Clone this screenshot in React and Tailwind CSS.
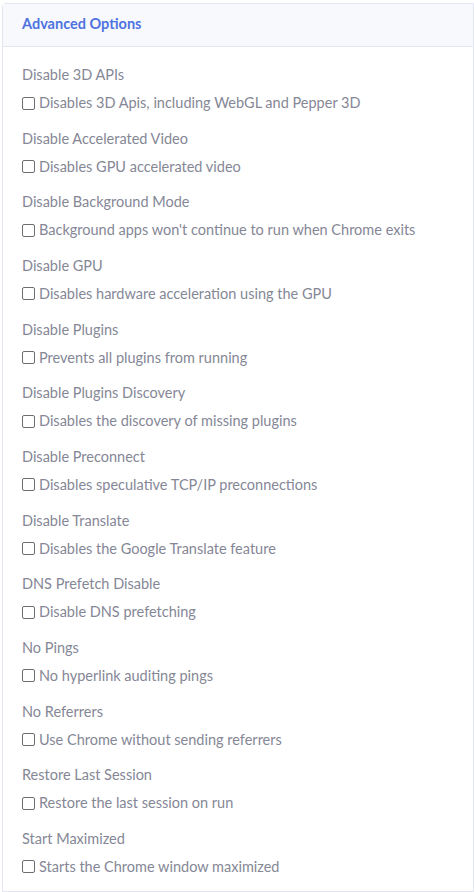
import React from "react";

const items = [
  ["Disable 3D APIs", "Disables 3D Apis, including WebGL and Pepper 3D"],
  ["Disable Accelerated Video", "Disables GPU accelerated video"],
  ["Disable Background Mode", "Background apps won't continue to run when Chrome exits"],
  ["Disable GPU", "Disables hardware acceleration using the GPU"],
  ["Disable Plugins", "Prevents all plugins from running"],
  ["Disable Plugins Discovery", "Disables the discovery of missing plugins"],
  ["Disable Preconnect", "Disables speculative TCP/IP preconnections"],
  ["Disable Translate", "Disables the Google Translate feature"],
  ["DNS Prefetch Disable", "Disable DNS prefetching"],
  ["No Pings", "No hyperlink auditing pings"],
  ["No Referrers", "Use Chrome without sending referrers"],
  ["Restore Last Session", "Restore the last session on run"],
  ["Start Maximized", "Starts the Chrome window maximized"],
];

export default function App() {
  return (
    <div
      className="w-[474px] h-[892px] overflow-hidden bg-white pt-[3px] pl-[2px]"
      style={{ fontFamily: 'Lato, "Open Sans", sans-serif' }}
    >
      <div className="border border-[#e3e6f0] rounded-tl-[4px] bg-white">
        <div className="h-[43px] flex items-center pb-[3px] px-[19px] bg-[#f8f9fc] border-b border-[#e3e6f0]">
          <span className="text-[14.5px] font-bold text-[#4e73df]">Advanced Options</span>
        </div>
        <div className="px-[19px] pt-[16px]">
          {items.map(([label, desc]) => (
            <div key={label} className="mb-[11.67px]">
              <div className="text-[14.5px] leading-[24px] mb-[4px] text-[#858796]">{label}</div>
              <label className="flex items-center text-[14.5px] leading-[24px] text-[#858796]">
                <span className="inline-block w-[13px] h-[13px] border border-[#6e6e6e] rounded-[2px] mr-[4px] bg-white" />
                {desc}
              </label>
            </div>
          ))}
        </div>
      </div>
    </div>
  );
}
